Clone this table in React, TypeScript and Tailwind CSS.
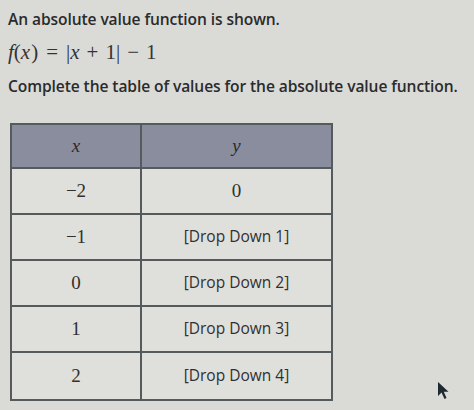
const rows: [string, string, boolean][] = [
  ['−2', '0', true],
  ['−1', '[Drop Down 1]', false],
  ['0', '[Drop Down 2]', false],
  ['1', '[Drop Down 3]', false],
  ['2', '[Drop Down 4]', false],
];

const serif = "font-['Liberation_Serif','DejaVu_Serif',serif]";

export default function App() {
  return (
    <div className="relative w-[474px] h-[410px] overflow-hidden bg-[#dadbd6] text-[#2a2b2c] font-['Open_Sans',sans-serif]">
      <div className="pl-[8px] pt-[8px]">
        <p className="text-[15.6px] font-semibold leading-[22px] tracking-[-0.1px]">An absolute value function is shown.</p>

        {/* formula */}
        <p className={`${serif} mt-[9px] text-[21px] leading-[26px] text-[#333]`}>
          <i>f</i>(<i className="pr-[1px]">x</i>)<span className="mx-[8px]">=</span>|<i>x</i><span className="mx-[7px]">+</span>1|<span className="mx-[7px]">−</span>1
        </p>

        <p className="mt-[10px] text-[15.6px] font-semibold leading-[22px] tracking-[-0.1px]">
          Complete the table of values for the absolute value function.
        </p>
      </div>

      {/* table */}
      <div className="ml-[10px] mt-[26px] w-[323px] border-2 border-[#555a5c]">
        <div className="flex h-[44px] bg-[#8a8d9e] border-b-2 border-[#555a5c]">
          <div className={`${serif} w-[130px] flex items-center justify-center border-r-2 border-[#555a5c] text-[19px] italic text-[#2a2b30]`}>x</div>
          <div className={`${serif} flex-1 flex items-center justify-center text-[19px] italic text-[#2a2b30]`}>y</div>
        </div>
        {rows.map(([x, y, num], i) => (
          <div
            key={x}
            className={`flex h-[46px] bg-[#dfe0dc] ${i < rows.length - 1 ? 'border-b-2 border-[#555a5c]' : ''}`}
          >
            <div className={`${serif} w-[130px] flex items-center justify-center border-r-2 border-[#555a5c] text-[19px] text-[#2f3032]`}>{x}</div>
            <div
              className={`flex-1 flex items-center justify-center ${num ? `${serif} text-[19px]` : 'text-[15.5px]'} text-[#2f3032]`}
            >
              {y}
            </div>
          </div>
        ))}
      </div>

      {/* mouse cursor */}
      <svg className="absolute left-[437px] top-[381px]" width="14" height="20" viewBox="0 0 14 20">
        <path d="M1 1 L1 15 L4.5 11.5 L7.5 18 L9.5 17 L6.8 10.8 L11.5 10.8 Z" fill="#1f2a30" />
      </svg>
    </div>
  );
}
